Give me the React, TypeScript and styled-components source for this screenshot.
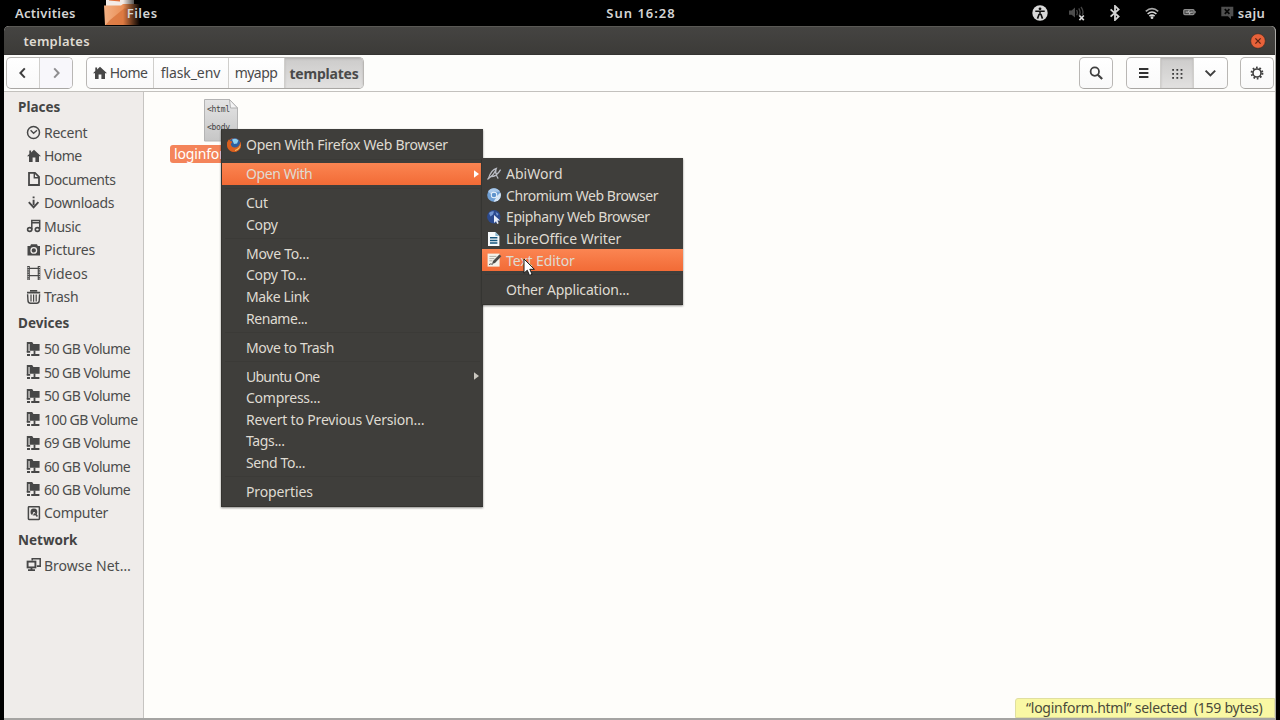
import React from "react";
import styled, { createGlobalStyle, css } from "styled-components";

const Global = createGlobalStyle`
  * { box-sizing: border-box; }
  body { margin: 0; background: #000; overflow: hidden; }
  svg { display: block; flex: none; }
`;

const Desktop = styled.div`
  position: relative;
  width: 1280px;
  height: 720px;
  overflow: hidden;
  background: #000;
  display: flex;
  flex-direction: column;
  font-family: "Noto Sans", "Open Sans", sans-serif;
  font-size: 14px;
  color: #4c4c4c;
  cursor: default;
`;

const Label = styled.span<{ $ls?: number }>`
  white-space: pre;
  letter-spacing: ${(p) => p.$ls ?? 0}px;
`;

/* ---------- top panel ---------- */
const Panel = styled.header`
  height: 26px;
  flex: none;
  display: grid;
  grid-template-columns: 1fr auto 1fr;
  align-items: center;
  color: #d4d4d4;
  font-weight: 600;
  font-size: 13px;
  line-height: 26px;
`;
const PanelLeft = styled.div`
  display: flex;
  height: 26px;
  padding-left: 15px;
  gap: 28px;
`;
const AppMenu = styled.div`
  display: flex;
  height: 26px;
  overflow: hidden;
`;
const AppName = styled(Label)`
  margin-left: -15px;
  position: relative;
`;
const Clock = styled(Label)`
  padding-left: 2px;
`;
const PanelRight = styled.div`
  display: flex;
  justify-content: flex-end;
  align-items: center;
  height: 26px;
  padding-right: 15px;
`;
const Indicators = styled.div`
  display: flex;
  align-items: center;
  gap: 21.4px;
  margin-right: 3px;
`;

/* ---------- window ---------- */
const Window = styled.main`
  flex: 1;
  min-height: 0;
  margin: 0 4px 0 4px;
  display: flex;
  flex-direction: column;
  background: #fefdfa;
  border-radius: 5px 5px 0 0;
  border-right: 1px solid #a9a8a5;
  border-bottom: 2px solid #a5a4a2;
  overflow: hidden;
`;
const TitleBar = styled.div`
  height: 29px;
  flex: none;
  display: flex;
  align-items: center;
  justify-content: space-between;
  padding: 0 9px 0 19.5px;
  border-top: 1px solid #5a5955;
  border-bottom: 1px solid #353432;
  background: linear-gradient(#454442, #3c3b38);
  color: #dfdbd2;
  font-weight: 600;
  font-size: 13px;
  line-height: 26px;
`;
const Toolbar = styled.div`
  height: 37px;
  flex: none;
  display: flex;
  align-items: center;
  padding: 0 1px 0 2px;
  border-bottom: 1px solid #c3c1bd;
  background: #fdfdfb;
`;
const Spacer = styled.div`
  flex: 1;
`;
const ButtonGroup = styled.div<{ $gap: number }>`
  display: flex;
  height: 32px;
  margin-right: ${(p) => p.$gap}px;
  border: 1px solid #b9b7b4;
  border-bottom-color: #a9a7a4;
  border-radius: 5px;
  overflow: hidden;
  background: linear-gradient(#ffffff, #f9f9f9);
`;
const ToolButton = styled.div<{ $w: number; $active?: boolean; $dim?: boolean }>`
  width: ${(p) => p.$w}px;
  display: flex;
  align-items: center;
  justify-content: center;
  gap: 2px;
  color: ${(p) => (p.$dim ? "#8f8e90" : "#4a4a4a")};
  background: ${(p) => (p.$dim ? "#f8f7fb" : "transparent")};
  & + & { border-left: 1px solid #d0cfcc; }
  ${(p) =>
    p.$active &&
    css`
      background: linear-gradient(#cccbca, #e2e1e0);
      font-weight: 700;
      box-shadow: inset 0 1px 2px #b5b4b2;
    `}
`;
const Crumb = styled(Label)`
  padding: 0 1px 2px 0;
`;
const Body = styled.div`
  flex: 1;
  min-height: 0;
  display: flex;
`;
const Sidebar = styled.nav`
  width: 140px;
  flex: none;
  background: #efecea;
  border-right: 1px solid #c6c4c1;
`;
const SideHeading = styled.div`
  height: 28.8px;
  line-height: 30px;
  padding-left: 14px;
  font-weight: 700;
  font-size: 13.5px;
  color: #444;
`;
const SideRow = styled.div`
  height: 23.45px;
  display: flex;
  align-items: center;
  padding-left: 22px;
  gap: 2px;
`;
const Files = styled.section`
  flex: 1;
  display: flex;
  align-items: flex-start;
  padding: 7px 0 0 26px;
`;
const FileItem = styled.div`
  width: 102px;
  display: flex;
  flex-direction: column;
  align-items: center;
  gap: 2px;
`;
const FileName = styled.div`
  height: 18px;
  line-height: 17px;
  width: 102px;
  padding-left: 4px;
  border-radius: 3px;
  background: #f4845a;
  color: #fff;
`;
const StatusBar = styled.div`
  position: absolute;
  right: 5px;
  bottom: 2px;
  width: 260px;
  height: 20px;
  line-height: 18px;
  padding-left: 10px;
  background: #f9f8a4;
  border: 1px solid #e0dfa0;
  border-radius: 3px 0 0 0;
  color: #4a4a3a;
`;

/* ---------- menus ---------- */
const Menu = styled.div<{ $x: number; $y: number; $w: number }>`
  position: absolute;
  left: ${(p) => p.$x}px;
  top: ${(p) => p.$y}px;
  width: ${(p) => p.$w}px;
  padding: 5px 0 4px;
  background: #3f3e3b;
  border: solid #34332f;
  border-width: 0 0 1px 1px;
  box-shadow: 0 1px 2px rgba(0, 0, 0, 0.45);
  color: #dfdbd2;
`;
const SubMenu = styled(Menu)`
  border-left: 0;
`;
const MenuItem = styled.div<{ $on?: boolean; $inset?: number }>`
  height: 21.6px;
  display: flex;
  align-items: center;
  margin-right: ${(p) => p.$inset ?? 0}px;
  padding: 0 2px 0 3px;
  ${(p) => p.$on && css`background: linear-gradient(#fb8552, #f26b36);`}
`;
const IconSlot = styled.span`
  width: 21px;
  padding-left: 1px;
  flex: none;
`;
const MenuText = styled(Label)`
  flex: 1;
`;
const Divider = styled.div`
  height: 7.4px;
  display: flex;
  align-items: center;
  &::after {
    content: "";
    height: 1px;
    flex: 1;
    margin: 0 3px;
    background: #3b3a37;
  }
`;
const Pointer = styled.div`
  position: absolute;
  left: 523px;
  top: 258px;
`;

/* ---------- icons ---------- */
const S = ({ w = 16, h = w, vb, children }: any) => (
  <svg width={w} height={h} viewBox={vb ?? `0 0 ${w} ${h}`} fill="none" stroke="none">
    {children}
  </svg>
);
const C = "#474747";

const HomeIcon = () => (
  <S>
    <path d="M8 1.8 15 8.3h-2V14H9.4V9.6H6.6V14H3V8.3H1L3.3 6V2.6h1.8v1.8z" fill={C} />
  </S>
);
const RecentIcon = () => (
  <S>
    <circle cx="7.5" cy="7.5" r="6" stroke={C} strokeWidth="1.5" />
    <path d="M4.6 5.2 7.6 8.2 11 5.2" stroke={C} strokeWidth="1.4" />
  </S>
);
const DocIcon = () => (
  <S>
    <path d="M3 1.9h6l4 4V14H3z" stroke={C} strokeWidth="1.8" />
    <path d="M8.3 2v4.7H13" stroke={C} strokeWidth="1.4" />
  </S>
);
const DownloadIcon = () => (
  <S>
    <path d="M7.6 1.5v1.8M7.6 4.7v5.6" stroke={C} strokeWidth="1.9" />
    <path d="M2.8 7.2 7.6 12.3 12.4 7.2" stroke={C} strokeWidth="1.9" />
  </S>
);
const MusicIcon = () => (
  <S>
    <path d="M5.8 11.5V2.4h7.9v8.8M5.8 4.7h8" stroke={C} strokeWidth="1.5" />
    <ellipse cx="3.7" cy="11.5" rx="2.1" ry="1.9" stroke={C} strokeWidth="1.6" />
    <ellipse cx="11.4" cy="11.5" rx="2.1" ry="1.9" stroke={C} strokeWidth="1.6" />
  </S>
);
const PicturesIcon = () => (
  <S>
    <path d="M1.5 4h2.7L5 2.2h6L11.8 4H14v9.4H1.5z" fill={C} />
    <circle cx="7.8" cy="8.4" r="2.8" stroke="#efecea" strokeWidth="1.3" />
  </S>
);
const VideosIcon = () => (
  <S>
    <path d="M2.5 1v14M13 1v14" stroke={C} strokeWidth="2.6" />
    <path d="M2.2 2v13M13.3 2v13" stroke="#efecea" strokeWidth="1" strokeDasharray="1 1.3" />
    <path d="M3 3.4h10M3 10.6h10" stroke={C} strokeWidth="1.3" />
  </S>
);
const TrashIcon = () => (
  <S>
    <path d="M1 3.6h13.2M4 1.8h7.2" stroke={C} strokeWidth="1.6" />
    <path d="M1.6 5.2 2 12q.4 2.2 2.4 2.2h6.4q2 0 2.4-2.2l.4-6.8" stroke={C} strokeWidth="1.4" />
    <path d="M5 5.4v7M7.6 5.4v7.4M10.2 5.4v7" stroke={C} strokeWidth="1.2" />
  </S>
);
const VolumeIcon = () => (
  <S>
    <path d="M.8 1h5.4l1.2 1.9h6.2v6.9H3.6V3.1H2.5v8.2H.8z" fill={C} />
    <path d="M.8 10.9h3.4M8.5 9.5v4.4M1 14h3M5.2 14h8.2" stroke={C} strokeWidth="1.8" />
  </S>
);
const ComputerIcon = () => (
  <S>
    <rect x="2.4" y="1.8" width="11" height="12.6" rx="0.6" stroke={C} strokeWidth="1.5" />
    <circle cx="7.9" cy="7" r="3.4" fill={C} />
    <path d="M8 7l3.4 4.6" stroke={C} strokeWidth="1.6" />
    <path d="M6.4 10.6 8 7l1 1.6" stroke="#efecea" strokeWidth="1" />
  </S>
);
const NetworkIcon = () => (
  <S>
    <path d="M6.2 3.4V1.8h8V9h-3.4M11 9.2h4" stroke={C} strokeWidth="1.5" />
    <rect x="1.6" y="4.6" width="7.8" height="5.8" stroke={C} strokeWidth="1.9" />
    <path d="M5.5 10v3M2 13.2h7" stroke={C} strokeWidth="1.8" />
  </S>
);
const Chevron = ({ d, c = "#3f3f3f" }: { d: string; c?: string }) => (
  <S>
    <path d={d} stroke={c} strokeWidth="2" />
  </S>
);
const SearchIcon = () => (
  <S>
    <circle cx="6.8" cy="6.6" r="4.2" stroke="#404040" strokeWidth="1.8" />
    <path d="m9.8 9.8 4.4 4.2" stroke="#404040" strokeWidth="2.2" />
  </S>
);
const ListIcon = () => (
  <S>
    <path d="M3 4h9.4M3 8h9.4M3 12h9.4" stroke="#333" strokeWidth="2" />
  </S>
);
const GridIcon = () => (
  <S>
    {[4.8, 8.8, 12.8].map((y) =>
      [4, 8.2, 12.4].map((x) => <rect key={`${x}-${y}`} x={x - 0.8} y={y - 0.8} width="1.8" height="1.8" fill="#3c3c3c" />)
    )}
  </S>
);
const GearIcon = () => (
  <S>
    <circle cx="8" cy="8" r="5.4" stroke="#404040" strokeWidth="2" strokeDasharray="1.7 1.7" />
    <circle cx="8" cy="8" r="4" stroke="#404040" strokeWidth="1.6" />
  </S>
);
const FolderAppIcon = () => (
  <svg width="38" height="26" viewBox="0 0 38 26">
    <defs>
      <linearGradient id="fo" x1="0" y1="0" x2="1" y2="0">
        <stop offset="0" stopColor="#f3b083" />
        <stop offset="0.6" stopColor="#e88a50" />
      </linearGradient>
      <linearGradient id="fade">
        <stop offset="0.5" stopColor="#000" stopOpacity="0" />
        <stop offset="0.95" stopColor="#000" />
      </linearGradient>
    </defs>
    <path d="M2 0h28v7H2z" fill="#f3ebe6" />
    <path d="M5 0h11v1.4L5 .6z" fill="#e0703c" />
    <path d="M0 5.5h17l2-1.5h19v21H1z" fill="url(#fo)" />
    <path d="M6 20 20 8.5l18 1V25H1.5z" fill="#d9743c" opacity="0.8" />
    <rect width="38" height="26" fill="url(#fade)" />
  </svg>
);
const AccessIcon = () => (
  <S>
    <circle cx="8" cy="8" r="7.7" fill="#d8d8d8" />
    <circle cx="8" cy="3.8" r="1.4" fill="#111" />
    <path d="M3.3 6.2h9.4M8 6v4M7.2 9l-1.7 4.6M8.8 9l1.7 4.6" stroke="#111" strokeWidth="1.6" />
  </S>
);
const MutedIcon = () => (
  <S>
    <path d="M0 5.5h2.6L6 2.5v10L2.6 9.8H0z" fill="#4c4c4c" />
    <path d="M7.6 5q1.5 2.7 0 5.3M9.8 3.4q2.6 4.3 0 7.2M12 2q3.3 4.4 1.2 8" stroke="#444" strokeWidth="1.3" />
    <path d="m10.4 10.5 4.4 4.6m0-4.6-4.4 4.6" stroke="#d8d8d8" strokeWidth="1.7" />
  </S>
);
const BluetoothIcon = () => (
  <S>
    <path d="m3.6 4.4 8 7.2L8 15V1l3.6 3.4-8 7.2" stroke="#d4d4d4" strokeWidth="1.8" />
  </S>
);
const WifiIcon = () => (
  <S>
    <path d="M1.8 6.4q6.2-5.4 12.4 0" stroke="#a8a8a8" strokeWidth="1.7" />
    <path d="M3.6 9q4.4-4 8.8 0M5.4 11.2q2.6-2.2 5.2 0" stroke="#d8d8d8" strokeWidth="1.6" />
    <circle cx="8" cy="12.7" r="1.4" fill="#d8d8d8" />
  </S>
);
const BatteryIcon = () => (
  <S>
    <rect x="2.8" y="4.6" width="10.2" height="5" rx="1" fill="#4a4a4a" stroke="#8c8c8c" strokeWidth="1.3" />
    <path d="M14 6v2.2" stroke="#8c8c8c" strokeWidth="1.4" />
    <path d="M4.6 7.1h2.2M8.4 5.3 7.1 7.3h2.2L8.2 9.1M10 7.1h1.8" stroke="#b0b0b0" strokeWidth="1.1" />
  </S>
);
const ChatIcon = () => (
  <S>
    <path d="M2.3 1.8h12v9.4H12v3l-3-3H2.3z" fill="#4f4f4f" />
    <path d="m5.8 4.1 4.6 4.8m0-4.8L5.8 8.9" stroke="#050505" strokeWidth="1.7" />
  </S>
);
const CloseIcon = () => (
  <S>
    <circle cx="8" cy="8" r="7.3" fill="#e8623a" stroke="#3a2a22" strokeWidth="0.6" />
    <path d="m5.4 5.4 5.2 5.2m0-5.2-5.2 5.2" stroke="#5c2413" strokeWidth="1.3" />
  </S>
);
const FirefoxIcon = () => (
  <S>
    <circle cx="8" cy="8" r="7" fill="#d8571c" />
    <circle cx="8.6" cy="6.6" r="5.6" fill="#2d5f9e" />
    <path d="M6 2.6q4-2 6.4.8L11 6.4 8 7z" fill="#8fd0ee" />
    <path d="M1.2 5.2 2.8 2.4l1 1.8q2-.4 2.4 1L4.8 7q.6 3.6 4 3.6 4 0 5.8-5.6 1.4 5.4-2 8.2-4 3-8.4.4Q.6 11 1.2 5.2z" fill="#d9601f" />
    <path d="M9 13q4.4-1.4 5.4-6 .6 5.4-5.4 7z" fill="#f3c56a" />
  </S>
);
const AbiIcon = () => (
  <S>
    <path d="M1.4 13.4Q8.4 9 10.4 2.4 5 4 2.4 12.6M10 3q-1 5 2.2 9.6M4 10.6q6 .8 10.6-7" stroke="#b9bcc4" strokeWidth="1.3" />
  </S>
);
const ChromiumIcon = () => (
  <S>
    <circle cx="8" cy="8" r="6.8" fill="#6f9fd4" />
    <path d="M8 1.2a6.8 6.8 0 0 1 6 3.6H8L4.6 7 2.2 4.4A6.8 6.8 0 0 1 8 1.2z" fill="#a9c8ea" />
    <path d="M14.4 5.4a6.8 6.8 0 0 1-6.8 9.3L11 9z" fill="#d5e5f6" />
    <circle cx="8" cy="8" r="3.2" fill="#eef5fc" />
    <circle cx="8" cy="8" r="2.3" fill="#5f93cc" />
  </S>
);
const EpiphanyIcon = () => (
  <S>
    <circle cx="7.8" cy="7.8" r="6.7" fill="#2c4a8e" />
    <path d="M3 4q2.6-2.4 5-1.6L7 5.6 4.4 7.4zM9.6 3l3 2-1.6 2z" fill="#7396d2" />
    <path d="M8 6v8l2-1.8 1.2 2.8 1.5-.7-1.3-2.7h2.7z" fill="#e8eefa" />
  </S>
);
const WriterIcon = () => (
  <S>
    <path d="M2 1h7.4L13.4 5V15H2z" fill="#f6fafc" />
    <path d="M9.4 1l4 4h-4z" fill="#8cb8d0" />
    <path d="M4 6.7h7.4M4 9.4h7.4M4 12.1h7.4" stroke="#17567c" strokeWidth="1.5" />
  </S>
);
const EditorIcon = () => (
  <S>
    <rect x="1.6" y="1.6" width="12" height="13" fill="#f3f2ec" />
    <path d="M3.4 4.4h7M3.4 6.6h5M3.4 8.8h3" stroke="#a8a8a2" strokeWidth="0.9" />
    <path d="m6 12 1-3 6.4-6.6 2 1.8L9 11z" fill="#4b4b49" />
    <path d="M3 12.6q2-1.6 3.6 0" stroke="#55544f" strokeWidth="1" />
  </S>
);
const Arrow = ({ c }: { c: string }) => (
  <svg width="5" height="8" viewBox="0 0 5 8">
    <path d="M0 0.3 5 4 0 7.7z" fill={c} />
  </svg>
);
const HtmlFileIcon = () => (
  <svg width="34" height="44" viewBox="0 0 34 44">
    <defs>
      <linearGradient id="pg" x1="0" y1="0" x2="0" y2="1">
        <stop offset="0" stopColor="#e4e4e4" />
        <stop offset="1" stopColor="#c6c6c6" />
      </linearGradient>
    </defs>
    <path d="M.5.5h25l8 8.5v33H.5z" fill="url(#pg)" stroke="#b4b4b4" />
    <path d="M25.5.5l8 8.5h-7z" fill="#f4f4f4" stroke="#b0b0b0" />
    <g fill="#444" fontFamily="DejaVu Sans Mono, monospace" fontSize="8">
      <text x="3" y="12.6" textLength="23">&lt;html</text>
      <text x="3" y="31.4" textLength="23">&lt;body</text>
    </g>
  </svg>
);

/* ---------- data ---------- */
type Row = [React.ComponentType, string, number?];
const places: Row[] = [
  [RecentIcon, "Recent", -0.25],
  [HomeIcon, "Home", -0.6],
  [DocIcon, "Documents", -0.45],
  [DownloadIcon, "Downloads", -0.35],
  [MusicIcon, "Music", -0.3],
  [PicturesIcon, "Pictures", -0.2],
  [VideosIcon, "Videos"],
  [TrashIcon, "Trash", -0.3],
];
const devices: Row[] = [
  [VolumeIcon, "50 GB Volume", -0.52],
  [VolumeIcon, "50 GB Volume", -0.52],
  [VolumeIcon, "50 GB Volume", -0.52],
  [VolumeIcon, "100 GB Volume", -0.53],
  [VolumeIcon, "69 GB Volume", -0.52],
  [VolumeIcon, "60 GB Volume", -0.52],
  [VolumeIcon, "60 GB Volume", -0.52],
  [ComputerIcon, "Computer", -0.3],
];
const network: Row[] = [[NetworkIcon, "Browse Net…"]];

type Entry = { text: string; ls?: number; icon?: React.ComponentType; on?: boolean; sub?: boolean } | null;
const mainMenu: Entry[] = [
  { text: "Open With Firefox Web Browser", ls: -0.25, icon: FirefoxIcon },
  null,
  { text: "Open With", ls: -0.42, on: true, sub: true },
  null,
  { text: "Cut", ls: -0.3 },
  { text: "Copy", ls: -0.3 },
  null,
  { text: "Move To...", ls: -0.28 },
  { text: "Copy To...", ls: -0.28 },
  { text: "Make Link", ls: -0.4 },
  { text: "Rename...", ls: -0.45 },
  null,
  { text: "Move to Trash", ls: -0.35 },
  null,
  { text: "Ubuntu One", ls: -0.75 },
  { text: "Compress...", ls: -0.25 },
  { text: "Revert to Previous Version…", ls: -0.17 },
  { text: "Tags...", ls: -0.35 },
  { text: "Send To...", ls: -0.4 },
  null,
  { text: "Properties", ls: -0.12 },
].map((e) => (e && e.text === "Ubuntu One" ? { ...e, sub: true } : e));
const subMenu: Entry[] = [
  { text: "AbiWord", icon: AbiIcon },
  { text: "Chromium Web Browser", ls: -0.43, icon: ChromiumIcon },
  { text: "Epiphany Web Browser", ls: -0.4, icon: EpiphanyIcon },
  { text: "LibreOffice Writer", ls: -0.06, icon: WriterIcon },
  { text: "Text Editor", ls: -0.1, icon: EditorIcon, on: true },
  null,
  { text: "Other Application...", ls: -0.18 },
];

const Rows = ({ rows }: { rows: Row[] }) => (
  <>
    {rows.map(([Icon, text, ls], i) => (
      <SideRow key={i}>
        <Icon />
        <Label $ls={ls}>{text}</Label>
      </SideRow>
    ))}
  </>
);
const Entries = ({ items, inset }: { items: Entry[]; inset?: number }) => (
  <>
    {items.map((it, i) =>
      it ? (
        <MenuItem key={i} $on={it.on} $inset={inset}>
          <IconSlot>{it.icon && <it.icon />}</IconSlot>
          <MenuText $ls={it.ls}>{it.text}</MenuText>
          {it.sub && <Arrow c={it.on ? "#fff" : "#c9c6be"} />}
        </MenuItem>
      ) : (
        <Divider key={i} />
      )
    )}
  </>
);

export default function App() {
  return (
    <Desktop>
      <Global />
      <Panel>
        <PanelLeft>
          <Label $ls={0.27}>Activities</Label>
          <AppMenu>
            <FolderAppIcon />
            <AppName $ls={0.5}>Files</AppName>
          </AppMenu>
        </PanelLeft>
        <Clock $ls={1}>Sun 16:28</Clock>
        <PanelRight>
          <Indicators>
            <AccessIcon />
            <MutedIcon />
            <BluetoothIcon />
            <WifiIcon />
            <BatteryIcon />
            <ChatIcon />
          </Indicators>
          <Label $ls={0.3}>saju</Label>
        </PanelRight>
      </Panel>
      <Window>
        <TitleBar>
          <Label $ls={0.25}>templates</Label>
          <CloseIcon />
        </TitleBar>
        <Toolbar>
          <ButtonGroup $gap={13}>
            <ToolButton $w={32}><Chevron d="M9.8 3.4 5.4 8l4.4 4.6" /></ToolButton>
            <ToolButton $w={33} $dim><Chevron d="M6.2 3.4 10.6 8l-4.4 4.6" c="#8f8e90" /></ToolButton>
          </ButtonGroup>
          <ButtonGroup $gap={0}>
            <ToolButton $w={66}><HomeIcon /><Crumb $ls={-0.6}>Home</Crumb></ToolButton>
            <ToolButton $w={75}><Crumb $ls={-0.1}>flask_env</Crumb></ToolButton>
            <ToolButton $w={56}><Crumb $ls={-0.6}>myapp</Crumb></ToolButton>
            <ToolButton $w={79} $active><Label $ls={-0.2}>templates</Label></ToolButton>
          </ButtonGroup>
          <Spacer />
          <ButtonGroup $gap={13}>
            <ToolButton $w={32}><SearchIcon /></ToolButton>
          </ButtonGroup>
          <ButtonGroup $gap={12}>
            <ToolButton $w={33}><ListIcon /></ToolButton>
            <ToolButton $w={33} $active><GridIcon /></ToolButton>
            <ToolButton $w={34}><Chevron d="M2.6 5.6 7.4 10.4l4.8-4.8" /></ToolButton>
          </ButtonGroup>
          <ButtonGroup $gap={0}>
            <ToolButton $w={32}><GearIcon /></ToolButton>
          </ButtonGroup>
        </Toolbar>
        <Body>
          <Sidebar>
            <SideHeading><Label>Places</Label></SideHeading>
            <Rows rows={places} />
            <SideHeading><Label>Devices</Label></SideHeading>
            <Rows rows={devices} />
            <SideHeading><Label>Network</Label></SideHeading>
            <Rows rows={network} />
          </Sidebar>
          <Files>
            <FileItem>
              <HtmlFileIcon />
              <FileName><Label $ls={-0.15}>loginform.html</Label></FileName>
            </FileItem>
          </Files>
        </Body>
      </Window>
      <StatusBar><Label $ls={-0.25}>“loginform.html” selected  (159 bytes)</Label></StatusBar>
      <Menu $x={221} $y={129} $w={262}>
        <Entries items={mainMenu} inset={2} />
      </Menu>
      <SubMenu $x={482} $y={158} $w={201}>
        <Entries items={subMenu} />
      </SubMenu>
      <Pointer>
        <svg width="14" height="20" viewBox="0 0 14 20">
          <path d="M1 1v14.2l3.3-3 2.2 5.2 2.6-1.1-2.3-5h4.6z" fill="#fff" stroke="#1a1a1a" strokeWidth="1" />
        </svg>
      </Pointer>
    </Desktop>
  );
}
